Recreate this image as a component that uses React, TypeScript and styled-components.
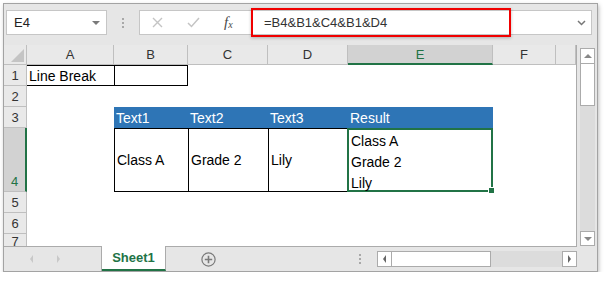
import styled, { createGlobalStyle } from 'styled-components';

const GlobalStyle = createGlobalStyle`
  body {
    margin: 0;
    background: #fff;
  }
`;

const uiFont = '"Liberation Sans", Arial, sans-serif';
const green = '#217346';
const lineGray = '#ababab';

const Window = styled.div`
  margin: 3px 0 0 3px;
  width: 595px;
  height: 269px;
  box-sizing: border-box;
  border: 1px solid #a3a3a3;
  background: #e6e6e6;
  box-shadow: 1px 2px 4px rgba(0, 0, 0, 0.25);
  display: flex;
  flex-direction: column;
  overflow: hidden;
  font-family: ${uiFont};
`;

const FormulaBar = styled.div`
  height: 41px;
  flex: none;
  display: flex;
  align-items: flex-start;
  padding: 6px 0 0 2px;
  box-sizing: border-box;
`;

const NameBox = styled.div`
  width: 101px;
  height: 25px;
  box-sizing: border-box;
  background: #fff;
  border: 1px solid #c6c6c6;
  display: flex;
  align-items: center;
  justify-content: space-between;
  padding: 0 6px 0 7px;
  font-size: 13px;
  color: #222;
`;

const Caret = styled.span`
  width: 0;
  height: 0;
  border-left: 4px solid transparent;
  border-right: 4px solid transparent;
  border-top: 4px solid #7a7a7a;
`;

const Grip = styled.div`
  width: 3px;
  margin: 8px 14px 0 15px;
  display: flex;
  flex-direction: column;
  gap: 2px;
  span {
    width: 2px;
    height: 2px;
    background: #a8a8a8;
  }
`;

const InputBox = styled.div`
  width: 453px;
  height: 25px;
  box-sizing: border-box;
  background: #fff;
  border: 1px solid #c6c6c6;
  display: flex;
  align-items: flex-start;
`;

const Buttons = styled.div`
  width: 111px;
  height: 23px;
  display: flex;
  align-items: center;
  padding-left: 12px;
  gap: 24px;
  box-sizing: border-box;
`;

const Fx = styled.span`
  font-family: "Liberation Serif", "Times New Roman", serif;
  font-style: italic;
  font-size: 15px;
  color: #4a4a4a;
  sub {
    font-size: 10px;
    vertical-align: -1px;
  }
`;

const Highlight = styled.div`
  width: 260px;
  height: 29px;
  margin: -3px 0 0 0;
  box-sizing: border-box;
  border: 2px solid #f00000;
  box-shadow: 0 1px 3px rgba(0, 0, 0, 0.25);
  display: flex;
  align-items: center;
  padding-left: 11px;
  font-size: 13px;
  color: #333;
`;

const Chevron = styled.div`
  margin-left: auto;
  margin-right: 5px;
  height: 23px;
  display: flex;
  align-items: center;
`;

const Main = styled.div`
  height: 201px;
  flex: none;
  display: flex;
`;

const Sheet = styled.div`
  width: 573px;
  box-sizing: border-box;
  border-right: 1px solid ${lineGray};
  background: #fff;
  display: grid;
  grid-template-columns: 23px 87px 74px 80px 80px 145px 63px 1fr;
  grid-template-rows: 20px 21px 21px 21px 64px 21px 21px 1fr;
  overflow: hidden;
`;

const Head = styled.div<{ $sel?: boolean; $row?: boolean }>`
  box-sizing: border-box;
  background: ${p => (p.$sel ? '#d2d2d2' : '#e9e9e9')};
  color: ${p => (p.$sel ? green : '#333')};
  font-size: 13px;
  display: flex;
  justify-content: center;
  align-items: ${p => (p.$row ? 'flex-end' : 'center')};
  padding-bottom: ${p => (p.$row ? '2px' : '0')};
  border-right: ${p => (p.$row && p.$sel ? `2px solid ${green}` : '1px solid #bfbfbf')};
  border-bottom: ${p => (!p.$row && p.$sel ? `2px solid ${green}` : '1px solid #bfbfbf')};
`;

const Corner = styled(Head)`
  align-items: flex-end;
  justify-content: flex-end;
  padding: 0 2px 2px 0;
`;

const Cell = styled.div<{ $edges?: string; $fill?: boolean }>`
  box-sizing: border-box;
  display: flex;
  align-items: center;
  padding: 0 2px;
  background: ${p => (p.$fill ? '#2e75b6' : '#fff')};
  color: ${p => (p.$fill ? '#fff' : '#000')};
  font-family: "Liberation Sans", Arial, sans-serif;
  font-size: 14px;
  white-space: nowrap;
  overflow: hidden;
  border: 0 solid #000;
  border-top-width: ${p => (p.$edges?.includes('t') ? 1 : 0)}px;
  border-right-width: ${p => (p.$edges?.includes('r') ? 1 : 0)}px;
  border-bottom-width: ${p => (p.$edges?.includes('b') ? 1 : 0)}px;
  border-left-width: ${p => (p.$edges?.includes('l') ? 1 : 0)}px;
`;

const Active = styled.div`
  position: relative;
  margin-left: -1px;
  box-sizing: border-box;
  border: 2px solid ${green};
  padding: 1px 2px 0;
  font-size: 14px;
  line-height: 21px;
  color: #000;
  background: #fff;
`;

const FillHandle = styled.span`
  position: absolute;
  right: -4px;
  bottom: -4px;
  width: 5px;
  height: 5px;
  background: ${green};
  border: 1px solid #fff;
`;

const VScroll = styled.div`
  width: 15px;
  margin: 3px 0 0 3px;
  display: flex;
  flex-direction: column;
  background: #dcdcdc;
`;

const ScrollBtn = styled.div`
  box-sizing: border-box;
  background: #fff;
  border: 1px solid ${lineGray};
  display: flex;
  align-items: center;
  justify-content: center;
`;

const VThumb = styled.div`
  height: 42px;
  box-sizing: border-box;
  background: #fff;
  border: 1px solid ${lineGray};
  border-top: none;
`;

const Track = styled.div`
  flex: 1;
`;

const Arrow = styled.span<{ $dir: 'up' | 'down' | 'left' | 'right'; $color?: string }>`
  width: 0;
  height: 0;
  border: 4px solid transparent;
  ${p =>
    p.$dir === 'up'
      ? `border-bottom-color: ${p.$color || '#777'}; border-top-width: 0;`
      : p.$dir === 'down'
      ? `border-top-color: ${p.$color || '#777'}; border-bottom-width: 0;`
      : p.$dir === 'left'
      ? `border-right-color: ${p.$color || '#777'}; border-width: 4px 3px 4px 0;`
      : `border-left-color: ${p.$color || '#777'}; border-width: 4px 0 4px 3px;`}
`;

const TabBar = styled.div`
  flex: 1;
  display: flex;
`;

const Nav = styled.div`
  width: 98px;
  box-sizing: border-box;
  border-top: 1px solid ${lineGray};
  border-right: 1px solid ${lineGray};
  display: flex;
  align-items: center;
  padding-left: 26px;
  gap: 24px;
`;

const Tab = styled.div`
  width: 64px;
  box-sizing: border-box;
  background: #fff;
  border-right: 1px solid ${lineGray};
  border-bottom: 2px solid ${green};
  display: flex;
  align-items: center;
  justify-content: center;
  padding-bottom: 1px;
  color: ${green};
  font-weight: bold;
  font-size: 13px;
`;

const TabRest = styled.div`
  width: 411px;
  box-sizing: border-box;
  border-top: 1px solid ${lineGray};
  display: flex;
  align-items: center;
`;

const AddSheet = styled.div`
  margin-left: 35px;
  display: flex;
`;

const TabGrip = styled(Grip)`
  margin: 0 0 0 143px;
`;

const HScroll = styled.div`
  width: 201px;
  height: 16px;
  margin-left: 15px;
  display: flex;
  background: #dcdcdc;
`;

const HThumb = styled.div`
  width: 99px;
  box-sizing: border-box;
  background: #fff;
  border: 1px solid ${lineGray};
  border-left: none;
`;

const rowHeads = ['1', '2', '3', '4', '5', '6', '7'];
const colHeads = ['A', 'B', 'C', 'D', 'E', 'F', ''];

type Spec = { text?: string; edges?: string; fill?: boolean };
const data: Record<string, Spec> = {
  A1: { text: 'Line Break', edges: 'tb' },
  B1: { edges: 'tbrl' },
  B3: { text: 'Text1', fill: true },
  C3: { text: 'Text2', fill: true },
  D3: { text: 'Text3', fill: true },
  E3: { text: 'Result', fill: true },
  B4: { text: 'Class A', edges: 'tbl' },
  C4: { text: 'Grade 2', edges: 'tbl' },
  D4: { text: 'Lily', edges: 'tblr' },
};

export default function App() {
  return (
    <>
      <GlobalStyle />
      <Window>
        <FormulaBar>
          <NameBox>
            E4
            <Caret />
          </NameBox>
          <Grip>
            <span />
            <span />
            <span />
          </Grip>
          <InputBox>
            <Buttons>
              <svg width="11" height="11" viewBox="0 0 11 11">
                <path d="M1 1 L10 10 M10 1 L1 10" stroke="#c4c4c4" strokeWidth="1.4" />
              </svg>
              <svg width="13" height="11" viewBox="0 0 13 11">
                <path d="M1 6 L4.5 9.5 L12 1" stroke="#c4c4c4" strokeWidth="1.5" fill="none" />
              </svg>
              <Fx>
                f<sub>x</sub>
              </Fx>
            </Buttons>
            <Highlight>=B4&amp;B1&amp;C4&amp;B1&amp;D4</Highlight>
            <Chevron>
              <svg width="9" height="6" viewBox="0 0 9 6">
                <path d="M1 1 L4.5 4.5 L8 1" stroke="#777" strokeWidth="1.5" fill="none" />
              </svg>
            </Chevron>
          </InputBox>
        </FormulaBar>
        <Main>
          <Sheet>
            <Corner>
              <svg width="13" height="13" viewBox="0 0 13 13">
                <path d="M13 0 L13 13 L0 13 Z" fill="#c4c4c4" />
              </svg>
            </Corner>
            {colHeads.map(c => (
              <Head key={c || 'G'} $sel={c === 'E'}>
                {c}
              </Head>
            ))}
            {rowHeads.map(r => (
              <Row key={r} r={r} />
            ))}
          </Sheet>
          <VScroll>
            <ScrollBtn style={{ height: 16 }}>
              <Arrow $dir="up" $color="#888" />
            </ScrollBtn>
            <VThumb />
            <Track />
            <ScrollBtn style={{ height: 15 }}>
              <Arrow $dir="down" $color="#888" />
            </ScrollBtn>
          </VScroll>
        </Main>
        <TabBar>
          <Nav>
            <Arrow $dir="left" $color="#c8c8c8" />
            <Arrow $dir="right" $color="#c8c8c8" />
          </Nav>
          <Tab>Sheet1</Tab>
          <TabRest>
            <AddSheet>
              <svg width="15" height="15" viewBox="0 0 15 15">
                <circle cx="7.5" cy="7.5" r="6.6" stroke="#7a7a7a" strokeWidth="1.2" fill="none" />
                <path d="M7.5 3.8 V11.2 M3.8 7.5 H11.2" stroke="#7a7a7a" strokeWidth="1.6" />
              </svg>
            </AddSheet>
            <TabGrip>
              <span />
              <span />
              <span />
            </TabGrip>
            <HScroll>
              <ScrollBtn style={{ width: 15 }}>
                <Arrow $dir="left" $color="#666" />
              </ScrollBtn>
              <HThumb />
              <Track />
              <ScrollBtn style={{ width: 15 }}>
                <Arrow $dir="right" $color="#666" />
              </ScrollBtn>
            </HScroll>
          </TabRest>
        </TabBar>
      </Window>
    </>
  );
}

function Row({ r }: { r: string }) {
  return (
    <>
      <Head $row $sel={r === '4'}>
        {r}
      </Head>
      {['A', 'B', 'C', 'D', 'E', 'F', 'G'].map(c => {
        const id = c + r;
        if (id === 'E4') {
          return (
            <Active key={id}>
              Class A
              <br />
              Grade 2
              <br />
              Lily
              <FillHandle />
            </Active>
          );
        }
        const spec = data[id] || {};
        return (
          <Cell key={id} $edges={spec.edges} $fill={spec.fill}>
            {spec.text}
          </Cell>
        );
      })}
    </>
  );
}
